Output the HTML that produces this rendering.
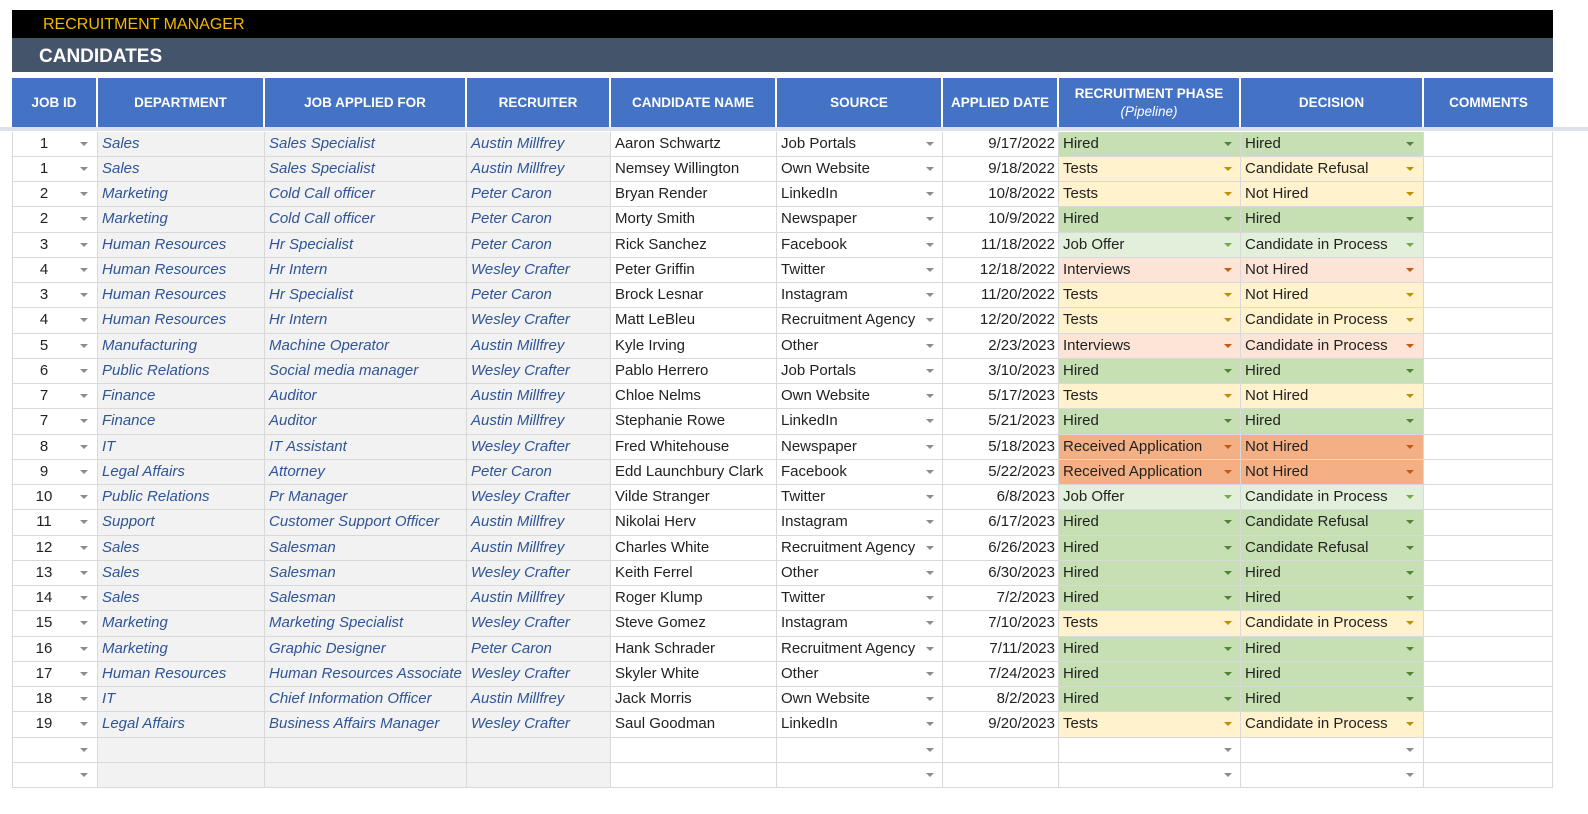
<!DOCTYPE html>
<html><head><meta charset="utf-8"><style>
*{margin:0;padding:0;box-sizing:border-box}
body{width:1588px;height:814px;background:#fff;font-family:"Liberation Sans",sans-serif;position:relative;overflow:hidden}
.t1{position:absolute;left:12px;top:10px;width:1541px;height:28px;background:#000;color:#F5B800;font-size:16px;line-height:29px;padding-left:31px}
.t2{position:absolute;left:12px;top:38px;width:1541px;height:34px;background:#44546A;color:#fff;font-size:19px;font-weight:bold;line-height:37px;padding-left:27px}
.hd{position:absolute;left:12px;top:78px;height:49px;display:flex;background:#4472C4}
.hd div{color:#fff;font-weight:bold;font-size:13.5px;display:flex;align-items:center;justify-content:center;text-align:center;border-right:2px solid #fff;line-height:18px}
.hd div:last-child{border-right:none}
.gl{position:absolute;left:0;top:127px;width:1588px;height:4px;background:#DCE1EA}
.r{position:absolute;left:12px;height:25.25px;display:flex;font-size:15px}
.r>span{position:relative;height:100%;border-right:1px solid #D9D9D9;border-bottom:1px solid #D9D9D9;line-height:24px;white-space:nowrap;overflow:hidden;color:#222}
.r>span:first-child{border-left:1px solid #D9D9D9}
.w1{width:86px}.w2{width:167px}.w3{width:202px}.w4{width:144px}.w5{width:166px}.w6{width:166px}.w7{width:116px}.w8{width:182px}.w9{width:183px}.w10{width:129px}
.a b{font-weight:normal;position:absolute;left:0;width:62px;text-align:center}
.b,.c,.d{background:#F2F2F2;color:#2F5597!important;font-style:italic;padding-left:4px}
.e{padding-left:4px}.f{padding-left:4px}.g{text-align:right;padding-right:3px}
.h,.i{padding-left:4px}
.ar{position:absolute;top:10px;width:0;height:0;border-left:4px solid transparent;border-right:4px solid transparent;border-top:4px solid #8C8C8C}
.a .ar{right:9px}.f .ar{right:8px}.h .ar{right:8px}.i .ar{right:9px}
.G{background:#C6E0B4}.G .ar{border-top-color:#548235}
.Y{background:#FFF2CC}.Y .ar{border-top-color:#BF8F00}
.L{background:#E2EFDA}.L .ar{border-top-color:#70AD47}
.P{background:#FCE4D6}.P .ar{border-top-color:#C65911}
.O{background:#F4B084}.O .ar{border-top-color:#C65911}
</style></head><body>
<div class="t1">RECRUITMENT MANAGER</div>
<div class="t2">CANDIDATES</div>
<div class="hd">
<div class="w1">JOB ID</div><div class="w2">DEPARTMENT</div><div class="w3">JOB APPLIED FOR</div><div class="w4">RECRUITER</div><div class="w5">CANDIDATE NAME</div><div class="w6">SOURCE</div><div class="w7">APPLIED DATE</div><div class="w8" style="flex-direction:column">RECRUITMENT PHASE<i style="font-weight:normal">(Pipeline)</i></div><div class="w9">DECISION</div><div class="w10">COMMENTS</div>
</div>
<div class="gl"></div>

<div class="r" style="top:131.5px"><span class="w1 a"><b>1</b><i class="ar"></i></span><span class="w2 b">Sales</span><span class="w3 c">Sales Specialist</span><span class="w4 d">Austin Millfrey</span><span class="w5 e">Aaron Schwartz</span><span class="w6 f">Job Portals<i class="ar"></i></span><span class="w7 g">9/17/2022</span><span class="w8 h G">Hired<i class="ar"></i></span><span class="w9 i G">Hired<i class="ar"></i></span><span class="w10"></span></div>
<div class="r" style="top:156.75px"><span class="w1 a"><b>1</b><i class="ar"></i></span><span class="w2 b">Sales</span><span class="w3 c">Sales Specialist</span><span class="w4 d">Austin Millfrey</span><span class="w5 e">Nemsey Willington</span><span class="w6 f">Own Website<i class="ar"></i></span><span class="w7 g">9/18/2022</span><span class="w8 h Y">Tests<i class="ar"></i></span><span class="w9 i Y">Candidate Refusal<i class="ar"></i></span><span class="w10"></span></div>
<div class="r" style="top:182px"><span class="w1 a"><b>2</b><i class="ar"></i></span><span class="w2 b">Marketing</span><span class="w3 c">Cold Call officer</span><span class="w4 d">Peter Caron</span><span class="w5 e">Bryan Render</span><span class="w6 f">LinkedIn<i class="ar"></i></span><span class="w7 g">10/8/2022</span><span class="w8 h Y">Tests<i class="ar"></i></span><span class="w9 i Y">Not Hired<i class="ar"></i></span><span class="w10"></span></div>
<div class="r" style="top:207.25px"><span class="w1 a"><b>2</b><i class="ar"></i></span><span class="w2 b">Marketing</span><span class="w3 c">Cold Call officer</span><span class="w4 d">Peter Caron</span><span class="w5 e">Morty Smith</span><span class="w6 f">Newspaper<i class="ar"></i></span><span class="w7 g">10/9/2022</span><span class="w8 h G">Hired<i class="ar"></i></span><span class="w9 i G">Hired<i class="ar"></i></span><span class="w10"></span></div>
<div class="r" style="top:232.5px"><span class="w1 a"><b>3</b><i class="ar"></i></span><span class="w2 b">Human Resources</span><span class="w3 c">Hr Specialist</span><span class="w4 d">Peter Caron</span><span class="w5 e">Rick Sanchez</span><span class="w6 f">Facebook<i class="ar"></i></span><span class="w7 g">11/18/2022</span><span class="w8 h L">Job Offer<i class="ar"></i></span><span class="w9 i L">Candidate in Process<i class="ar"></i></span><span class="w10"></span></div>
<div class="r" style="top:257.75px"><span class="w1 a"><b>4</b><i class="ar"></i></span><span class="w2 b">Human Resources</span><span class="w3 c">Hr Intern</span><span class="w4 d">Wesley Crafter</span><span class="w5 e">Peter Griffin</span><span class="w6 f">Twitter<i class="ar"></i></span><span class="w7 g">12/18/2022</span><span class="w8 h P">Interviews<i class="ar"></i></span><span class="w9 i P">Not Hired<i class="ar"></i></span><span class="w10"></span></div>
<div class="r" style="top:283px"><span class="w1 a"><b>3</b><i class="ar"></i></span><span class="w2 b">Human Resources</span><span class="w3 c">Hr Specialist</span><span class="w4 d">Peter Caron</span><span class="w5 e">Brock Lesnar</span><span class="w6 f">Instagram<i class="ar"></i></span><span class="w7 g">11/20/2022</span><span class="w8 h Y">Tests<i class="ar"></i></span><span class="w9 i Y">Not Hired<i class="ar"></i></span><span class="w10"></span></div>
<div class="r" style="top:308.25px"><span class="w1 a"><b>4</b><i class="ar"></i></span><span class="w2 b">Human Resources</span><span class="w3 c">Hr Intern</span><span class="w4 d">Wesley Crafter</span><span class="w5 e">Matt LeBleu</span><span class="w6 f">Recruitment Agency<i class="ar"></i></span><span class="w7 g">12/20/2022</span><span class="w8 h Y">Tests<i class="ar"></i></span><span class="w9 i Y">Candidate in Process<i class="ar"></i></span><span class="w10"></span></div>
<div class="r" style="top:333.5px"><span class="w1 a"><b>5</b><i class="ar"></i></span><span class="w2 b">Manufacturing</span><span class="w3 c">Machine Operator</span><span class="w4 d">Austin Millfrey</span><span class="w5 e">Kyle Irving</span><span class="w6 f">Other<i class="ar"></i></span><span class="w7 g">2/23/2023</span><span class="w8 h P">Interviews<i class="ar"></i></span><span class="w9 i P">Candidate in Process<i class="ar"></i></span><span class="w10"></span></div>
<div class="r" style="top:358.75px"><span class="w1 a"><b>6</b><i class="ar"></i></span><span class="w2 b">Public Relations</span><span class="w3 c">Social media manager</span><span class="w4 d">Wesley Crafter</span><span class="w5 e">Pablo Herrero</span><span class="w6 f">Job Portals<i class="ar"></i></span><span class="w7 g">3/10/2023</span><span class="w8 h G">Hired<i class="ar"></i></span><span class="w9 i G">Hired<i class="ar"></i></span><span class="w10"></span></div>
<div class="r" style="top:384px"><span class="w1 a"><b>7</b><i class="ar"></i></span><span class="w2 b">Finance</span><span class="w3 c">Auditor</span><span class="w4 d">Austin Millfrey</span><span class="w5 e">Chloe Nelms</span><span class="w6 f">Own Website<i class="ar"></i></span><span class="w7 g">5/17/2023</span><span class="w8 h Y">Tests<i class="ar"></i></span><span class="w9 i Y">Not Hired<i class="ar"></i></span><span class="w10"></span></div>
<div class="r" style="top:409.25px"><span class="w1 a"><b>7</b><i class="ar"></i></span><span class="w2 b">Finance</span><span class="w3 c">Auditor</span><span class="w4 d">Austin Millfrey</span><span class="w5 e">Stephanie Rowe</span><span class="w6 f">LinkedIn<i class="ar"></i></span><span class="w7 g">5/21/2023</span><span class="w8 h G">Hired<i class="ar"></i></span><span class="w9 i G">Hired<i class="ar"></i></span><span class="w10"></span></div>
<div class="r" style="top:434.5px"><span class="w1 a"><b>8</b><i class="ar"></i></span><span class="w2 b">IT</span><span class="w3 c">IT Assistant</span><span class="w4 d">Wesley Crafter</span><span class="w5 e">Fred Whitehouse</span><span class="w6 f">Newspaper<i class="ar"></i></span><span class="w7 g">5/18/2023</span><span class="w8 h O">Received Application<i class="ar"></i></span><span class="w9 i O">Not Hired<i class="ar"></i></span><span class="w10"></span></div>
<div class="r" style="top:459.75px"><span class="w1 a"><b>9</b><i class="ar"></i></span><span class="w2 b">Legal Affairs</span><span class="w3 c">Attorney</span><span class="w4 d">Peter Caron</span><span class="w5 e">Edd Launchbury Clark</span><span class="w6 f">Facebook<i class="ar"></i></span><span class="w7 g">5/22/2023</span><span class="w8 h O">Received Application<i class="ar"></i></span><span class="w9 i O">Not Hired<i class="ar"></i></span><span class="w10"></span></div>
<div class="r" style="top:485px"><span class="w1 a"><b>10</b><i class="ar"></i></span><span class="w2 b">Public Relations</span><span class="w3 c">Pr Manager</span><span class="w4 d">Wesley Crafter</span><span class="w5 e">Vilde Stranger</span><span class="w6 f">Twitter<i class="ar"></i></span><span class="w7 g">6/8/2023</span><span class="w8 h L">Job Offer<i class="ar"></i></span><span class="w9 i L">Candidate in Process<i class="ar"></i></span><span class="w10"></span></div>
<div class="r" style="top:510.25px"><span class="w1 a"><b>11</b><i class="ar"></i></span><span class="w2 b">Support</span><span class="w3 c">Customer Support Officer</span><span class="w4 d">Austin Millfrey</span><span class="w5 e">Nikolai Herv</span><span class="w6 f">Instagram<i class="ar"></i></span><span class="w7 g">6/17/2023</span><span class="w8 h G">Hired<i class="ar"></i></span><span class="w9 i G">Candidate Refusal<i class="ar"></i></span><span class="w10"></span></div>
<div class="r" style="top:535.5px"><span class="w1 a"><b>12</b><i class="ar"></i></span><span class="w2 b">Sales</span><span class="w3 c">Salesman</span><span class="w4 d">Austin Millfrey</span><span class="w5 e">Charles White</span><span class="w6 f">Recruitment Agency<i class="ar"></i></span><span class="w7 g">6/26/2023</span><span class="w8 h G">Hired<i class="ar"></i></span><span class="w9 i G">Candidate Refusal<i class="ar"></i></span><span class="w10"></span></div>
<div class="r" style="top:560.75px"><span class="w1 a"><b>13</b><i class="ar"></i></span><span class="w2 b">Sales</span><span class="w3 c">Salesman</span><span class="w4 d">Wesley Crafter</span><span class="w5 e">Keith Ferrel</span><span class="w6 f">Other<i class="ar"></i></span><span class="w7 g">6/30/2023</span><span class="w8 h G">Hired<i class="ar"></i></span><span class="w9 i G">Hired<i class="ar"></i></span><span class="w10"></span></div>
<div class="r" style="top:586px"><span class="w1 a"><b>14</b><i class="ar"></i></span><span class="w2 b">Sales</span><span class="w3 c">Salesman</span><span class="w4 d">Austin Millfrey</span><span class="w5 e">Roger Klump</span><span class="w6 f">Twitter<i class="ar"></i></span><span class="w7 g">7/2/2023</span><span class="w8 h G">Hired<i class="ar"></i></span><span class="w9 i G">Hired<i class="ar"></i></span><span class="w10"></span></div>
<div class="r" style="top:611.25px"><span class="w1 a"><b>15</b><i class="ar"></i></span><span class="w2 b">Marketing</span><span class="w3 c">Marketing Specialist</span><span class="w4 d">Wesley Crafter</span><span class="w5 e">Steve Gomez</span><span class="w6 f">Instagram<i class="ar"></i></span><span class="w7 g">7/10/2023</span><span class="w8 h Y">Tests<i class="ar"></i></span><span class="w9 i Y">Candidate in Process<i class="ar"></i></span><span class="w10"></span></div>
<div class="r" style="top:636.5px"><span class="w1 a"><b>16</b><i class="ar"></i></span><span class="w2 b">Marketing</span><span class="w3 c">Graphic Designer</span><span class="w4 d">Peter Caron</span><span class="w5 e">Hank Schrader</span><span class="w6 f">Recruitment Agency<i class="ar"></i></span><span class="w7 g">7/11/2023</span><span class="w8 h G">Hired<i class="ar"></i></span><span class="w9 i G">Hired<i class="ar"></i></span><span class="w10"></span></div>
<div class="r" style="top:661.75px"><span class="w1 a"><b>17</b><i class="ar"></i></span><span class="w2 b">Human Resources</span><span class="w3 c">Human Resources Associate</span><span class="w4 d">Wesley Crafter</span><span class="w5 e">Skyler White</span><span class="w6 f">Other<i class="ar"></i></span><span class="w7 g">7/24/2023</span><span class="w8 h G">Hired<i class="ar"></i></span><span class="w9 i G">Hired<i class="ar"></i></span><span class="w10"></span></div>
<div class="r" style="top:687px"><span class="w1 a"><b>18</b><i class="ar"></i></span><span class="w2 b">IT</span><span class="w3 c">Chief Information Officer</span><span class="w4 d">Austin Millfrey</span><span class="w5 e">Jack Morris</span><span class="w6 f">Own Website<i class="ar"></i></span><span class="w7 g">8/2/2023</span><span class="w8 h G">Hired<i class="ar"></i></span><span class="w9 i G">Hired<i class="ar"></i></span><span class="w10"></span></div>
<div class="r" style="top:712.25px"><span class="w1 a"><b>19</b><i class="ar"></i></span><span class="w2 b">Legal Affairs</span><span class="w3 c">Business Affairs Manager</span><span class="w4 d">Wesley Crafter</span><span class="w5 e">Saul Goodman</span><span class="w6 f">LinkedIn<i class="ar"></i></span><span class="w7 g">9/20/2023</span><span class="w8 h Y">Tests<i class="ar"></i></span><span class="w9 i Y">Candidate in Process<i class="ar"></i></span><span class="w10"></span></div>
<div class="r" style="top:737.5px"><span class="w1 a"><b></b><i class="ar"></i></span><span class="w2 b"></span><span class="w3 c"></span><span class="w4 d"></span><span class="w5 e"></span><span class="w6 f"><i class="ar"></i></span><span class="w7 g"></span><span class="w8 h"><i class="ar"></i></span><span class="w9 i"><i class="ar"></i></span><span class="w10"></span></div>
<div class="r" style="top:762.75px"><span class="w1 a"><b></b><i class="ar"></i></span><span class="w2 b"></span><span class="w3 c"></span><span class="w4 d"></span><span class="w5 e"></span><span class="w6 f"><i class="ar"></i></span><span class="w7 g"></span><span class="w8 h"><i class="ar"></i></span><span class="w9 i"><i class="ar"></i></span><span class="w10"></span></div>
</body></html>
